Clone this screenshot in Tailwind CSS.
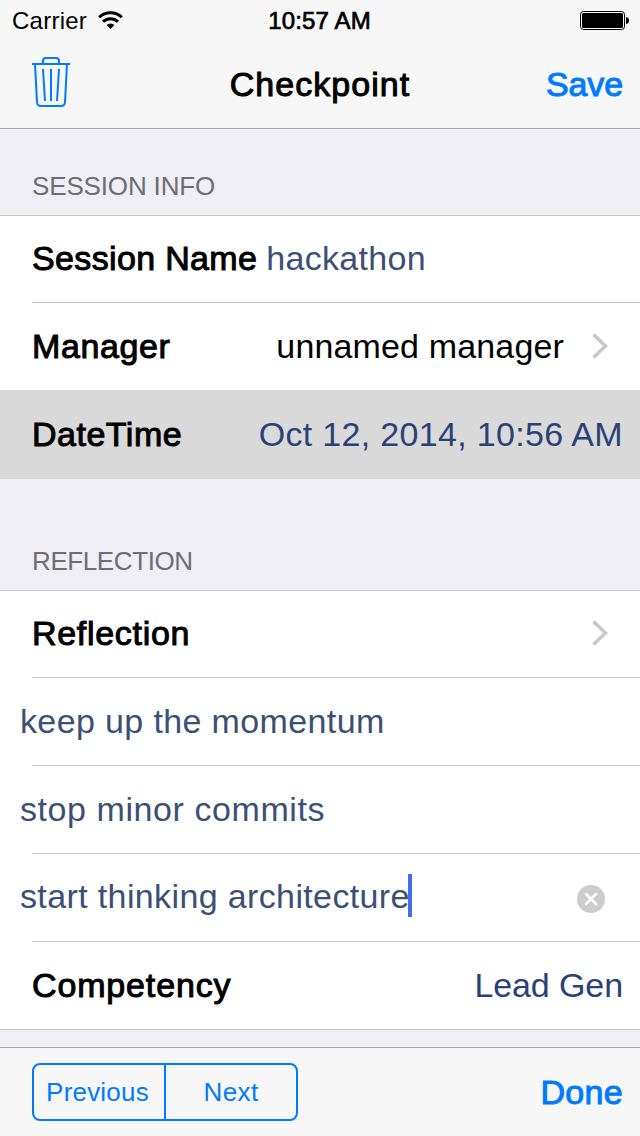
<!DOCTYPE html>
<html lang="en">
<head>
<meta charset="utf-8">
<title>Checkpoint</title>
<script src="https://cdn.jsdelivr.net/npm/@tailwindcss/browser@4"></script>
</head>
<body class="w-[640px] h-[1136px] overflow-hidden bg-[#efeef4] text-black text-[34px] leading-10 whitespace-nowrap font-['Liberation_Sans',Arial,sans-serif]">
<div class="flex flex-col h-full">
  <header class="h-[129px] bg-[#f7f7f7] border-b border-[#a7a7aa]">
    <div class="grid grid-cols-3 h-10 pl-3 pr-[11px] items-center text-2xl leading-[38px]">
      <div class="flex items-center gap-[11px]"><span class="pt-0.5 tracking-[0.25px]">Carrier</span>
        <svg class="w-[25px] h-[19px]" viewBox="0 0 25 19" fill="none" stroke="#000" stroke-width="3"><path d="M1.2 6.300a16.200 16.200 0 0 1 22.600 0"/><path d="M5 10.700a10.800 10.800 0 0 1 15 0"/><path d="M8.600 14a5.800 5.800 0 0 1 7.800 0L12.500 18Z" fill="#000" stroke="none"/></svg>
      </div>
      <span class="-ml-0.5 pt-0.5 text-center tracking-[0.15px] [-webkit-text-stroke:0.7px]">10:57 AM</span>
      <svg class="w-[49px] h-[19px] justify-self-end" viewBox="0 0 49 19"><rect x=".5" y=".5" width="44" height="18" rx="3" fill="none" stroke="#000"/><rect x="2" y="2" width="41" height="15" rx="1.5"/><path d="M46 6q3 .5 3 3.500t-3 3.500Z"/></svg>
    </div>
    <div class="grid grid-cols-[168px_240px_183px] h-[88px] pl-8 pr-[17px] items-center">
      <svg class="w-[38px] h-[51px] mt-[-4px]" viewBox="0 0 38 51" fill="none" stroke="#007aff" stroke-width="2"><path d="M0 7h38M11 7V4q0-3 3-3h10q3 0 3 3v3M3 7l2 38q.2 4 4 4h20q3.800 0 4-4l2-38M11 12l2 32M19 12v32M27 12l-2 32"/></svg>
      <h1 class="text-center tracking-[1.05px] [-webkit-text-stroke:1px]">Checkpoint</h1>
      <span class="text-right text-[#007aff] tracking-[-0.1px] [-webkit-text-stroke:1px]">Save</span>
    </div>
  </header>
  <main class="h-[918px]">
    <h2 class="h-[86px] pt-[37px] pl-8 text-[26px] tracking-[-0.15px] text-[#6d6d72]">SESSION INFO</h2>
    <section class="bg-white border-t border-[#c8c7cc]">
      <div class="flex items-center h-[86px] pl-8 pb-0.5 gap-[9px]"><span class="tracking-[0.35px] [-webkit-text-stroke:1px]">Session Name</span><span class="tracking-[0.3px] text-[#3c4f75]">hackathon</span></div>
      <div class="ml-8 border-t border-[#c8c7cc] h-[88px] flex items-center justify-between pr-8 pb-0.5">
        <span class="tracking-[0.6px] [-webkit-text-stroke:1px]">Manager</span>
        <div class="flex items-center gap-7"><span class="tracking-[0.15px]">unnamed manager</span><svg class="w-4 h-[26px]" viewBox="0 0 16 26" fill="none" stroke="#c7c7cc" stroke-width="3.500"><path d="M1.500 1.500L13.500 13L1.500 24.500"/></svg></div>
      </div>
      <div class="flex items-center justify-between h-[89px] pl-8 pr-[17px] pb-0.5 bg-[#d9d9d9]"><span class="tracking-[0.5px] [-webkit-text-stroke:1px]">DateTime</span><span class="tracking-[0.32px] text-[#2a4178]">Oct 12, 2014, 10:56 AM</span></div>
    </section>
    <h2 class="h-[111px] pt-[62px] pl-8 text-[26px] tracking-[-0.4px] text-[#6d6d72]">REFLECTION</h2>
    <section class="bg-white border-y border-[#c8c7cc]">
      <div class="h-[86px] flex items-center justify-between pl-8 pr-8 pb-0.5">
        <span class="tracking-[0.7px] [-webkit-text-stroke:1px]">Reflection</span>
        <svg class="w-4 h-[26px]" viewBox="0 0 16 26" fill="none" stroke="#c7c7cc" stroke-width="3.500"><path d="M1.500 1.500L13.500 13L1.500 24.500"/></svg>
      </div>
      <div class="ml-8 border-t border-[#c8c7cc] h-[88px] flex items-center pb-0.5 text-[#3c4f75]"><span class="-ml-3 tracking-[0.37px]">keep up the momentum</span></div>
      <div class="ml-8 border-t border-[#c8c7cc] h-[88px] flex items-center pb-0.5 text-[#3c4f75]"><span class="-ml-3 tracking-[0.57px]">stop minor commits</span></div>
      <div class="ml-8 border-t border-[#c8c7cc] h-[88px] flex items-center pb-1 text-[#3c4f75]"><span class="-ml-3 w-[388px] tracking-[0.37px]">start thinking architecture</span><i class="w-1 h-[43px] bg-[#466cf2]"></i>
        <svg class="size-7 mt-1.5 ml-auto mr-[35px]" viewBox="0 0 28 28"><circle cx="14" cy="14" r="14" fill="#ccc"/><path d="M9 9l10 10M19 9L9 19" stroke="#fff" stroke-width="2.500" stroke-linecap="round"/></svg></div>
      <div class="ml-8 border-t border-[#c8c7cc] h-[88px] flex items-center justify-between pr-[17px] pb-0.5"><span class="tracking-[0.85px] [-webkit-text-stroke:1px]">Competency</span><span class="tracking-[-0.1px] text-[#2a4178]">Lead Gen</span></div>
    </section>
  </main>
  <footer class="h-[89px] bg-[#f7f7f7] border-t border-[#a7a7aa] flex items-center justify-between pl-8 pr-[17px] text-[#007aff]">
    <div class="grid grid-cols-[130px_132px] w-[266px] h-[58px] border-2 border-[#007aff] rounded-lg text-[26px] text-center"><span class="pr-[3px] leading-[54px] tracking-[0.2px]">Previous</span><span class="border-l-2 border-[#007aff] leading-[54px] tracking-[0.4px]">Next</span></div>
    <span class="tracking-[0.3px] [-webkit-text-stroke:1px]">Done</span>
  </footer>
</div>
</body>
</html>
